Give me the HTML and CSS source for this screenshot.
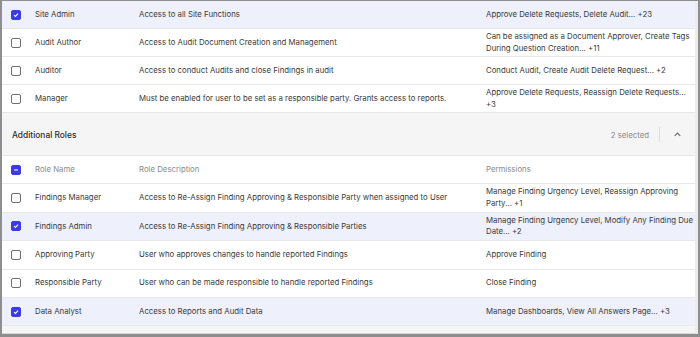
FILE: index.html
```html
<!DOCTYPE html>
<html>
<head>
<meta charset="utf-8">
<link rel="stylesheet" href="styles.css">
</head>
<body>
<div class="frame">
  <div class="card">
    <div class="row selected">
      <div class="cell check"><span class="cb checked"><svg viewBox="0 0 10 10"><path d="M2.6 5.2 L4.3 6.8 L7.6 3.2" /></svg></span></div>
      <div class="cell name">Site Admin</div>
      <div class="cell desc">Access to all Site Functions</div>
      <div class="cell perm">Approve Delete Requests, Delete Audit... +23</div>
    </div>
    <div class="row">
      <div class="cell check"><span class="cb"></span></div>
      <div class="cell name">Audit Author</div>
      <div class="cell desc">Access to Audit Document Creation and Management</div>
      <div class="cell perm">Can be assigned as a Document Approver, Create Tags During Question Creation... +11</div>
    </div>
    <div class="row">
      <div class="cell check"><span class="cb"></span></div>
      <div class="cell name">Auditor</div>
      <div class="cell desc">Access to conduct Audits and close Findings in audit</div>
      <div class="cell perm">Conduct Audit, Create Audit Delete Request... +2</div>
    </div>
    <div class="row">
      <div class="cell check"><span class="cb"></span></div>
      <div class="cell name">Manager</div>
      <div class="cell desc">Must be enabled for user to be set as a responsible party. Grants access to reports.</div>
      <div class="cell perm">Approve Delete Requests, Reassign Delete Requests... +3</div>
    </div>

    <div class="section">
      <div class="section-title">Additional Roles</div>
      <div class="section-meta">
        <span class="count">2 selected</span>
        <span class="divider"></span>
        <svg class="chev" viewBox="0 0 10 10"><path d="M2.5 6.2 L5 3.8 L7.5 6.2" /></svg>
      </div>
    </div>

    <div class="lower">
      <div class="row head">
        <div class="cell check"><span class="cb checked"><svg viewBox="0 0 10 10"><path d="M2.5 5 L7.5 5" /></svg></span></div>
        <div class="cell name">Role Name</div>
        <div class="cell desc">Role Description</div>
        <div class="cell perm">Permissions</div>
      </div>
      <div class="row">
        <div class="cell check"><span class="cb"></span></div>
        <div class="cell name">Findings Manager</div>
        <div class="cell desc">Access to Re-Assign Finding Approving &amp; Responsible Party when assigned to User</div>
        <div class="cell perm">Manage Finding Urgency Level, Reassign Approving Party... +1</div>
      </div>
      <div class="row selected">
        <div class="cell check"><span class="cb checked"><svg viewBox="0 0 10 10"><path d="M2.6 5.2 L4.3 6.8 L7.6 3.2" /></svg></span></div>
        <div class="cell name">Findings Admin</div>
        <div class="cell desc">Access to Re-Assign Finding Approving &amp; Responsible Parties</div>
        <div class="cell perm">Manage Finding Urgency Level, Modify Any Finding Due Date... +2</div>
      </div>
      <div class="row">
        <div class="cell check"><span class="cb"></span></div>
        <div class="cell name">Approving Party</div>
        <div class="cell desc">User who approves changes to handle reported Findings</div>
        <div class="cell perm">Approve Finding</div>
      </div>
      <div class="row">
        <div class="cell check"><span class="cb"></span></div>
        <div class="cell name">Responsible Party</div>
        <div class="cell desc">User who can be made responsible to handle reported Findings</div>
        <div class="cell perm">Close Finding</div>
      </div>
      <div class="row selected">
        <div class="cell check"><span class="cb checked"><svg viewBox="0 0 10 10"><path d="M2.6 5.2 L4.3 6.8 L7.6 3.2" /></svg></span></div>
        <div class="cell name">Data Analyst</div>
        <div class="cell desc">Access to Reports and Audit Data</div>
        <div class="cell perm">Manage Dashboards, View All Answers Page... +3</div>
      </div>
    </div>
  </div>
</div>
</body>
</html>
```
FILE: styles.css
```css
* { box-sizing: border-box; }
html, body {
  margin: 0;
  padding: 0;
  height: 100%;
}
body {
  background: #8e8e8e;
  font-family: Inter, "Noto Sans", sans-serif;
  font-size: 7.8px;
  color: #3b3b3b;
}
.frame {
  height: 337px;
  padding: 1px 2px 3px 2px;
}
.card {
  height: 100%;
  background: #f5f5f6;
  border-right: 3px solid #ececee;
  border-bottom: 1px solid #d9d9dc;
  overflow: hidden;
}
.row {
  display: grid;
  grid-template-columns: 33px 104px 347px 1fr;
  align-items: center;
  height: 28px;
  background: #ffffff;
  border-bottom: 1px solid #e8e8ea;
}
.lower .row {
  height: 28.4px;
}
.row.selected {
  background: #eef0fc;
}
.cell {
  line-height: 11.6px;
}
.check {
  display: flex;
  padding-left: 9px;
}
.perm {
  padding-right: 0;
}
.cb {
  width: 10px;
  height: 10px;
  border: 1px solid #6f6f6f;
  border-radius: 2px;
  background: #fff;
  display: block;
}
.cb.checked {
  background: #3c3ce4;
  border-color: #3c3ce4;
}
.cb svg {
  display: block;
  width: 8px;
  height: 8px;
  fill: none;
  stroke: #ffffff;
  stroke-width: 1.3;
}
.row.head .cell {
  color: #8b8b8b;
}
.section {
  display: flex;
  align-items: center;
  justify-content: space-between;
  height: 43px;
  padding: 1px 12px 0 10px;
  background: #f5f5f6;
  border-bottom: 1px solid #e8e8ea;
}
.section-title {
  font-size: 8.4px;
  font-weight: 500;
  color: #2e2e2e;
}
.section-meta {
  display: flex;
  align-items: center;
}
.count {
  color: #8b8b8b;
}
.divider {
  width: 1px;
  height: 15px;
  background: #dedede;
  margin: 0 12px 0 10px;
}
.chev {
  width: 11px;
  height: 11px;
  fill: none;
  stroke: #6a6a6a;
  stroke-width: 1.1;
}
```
